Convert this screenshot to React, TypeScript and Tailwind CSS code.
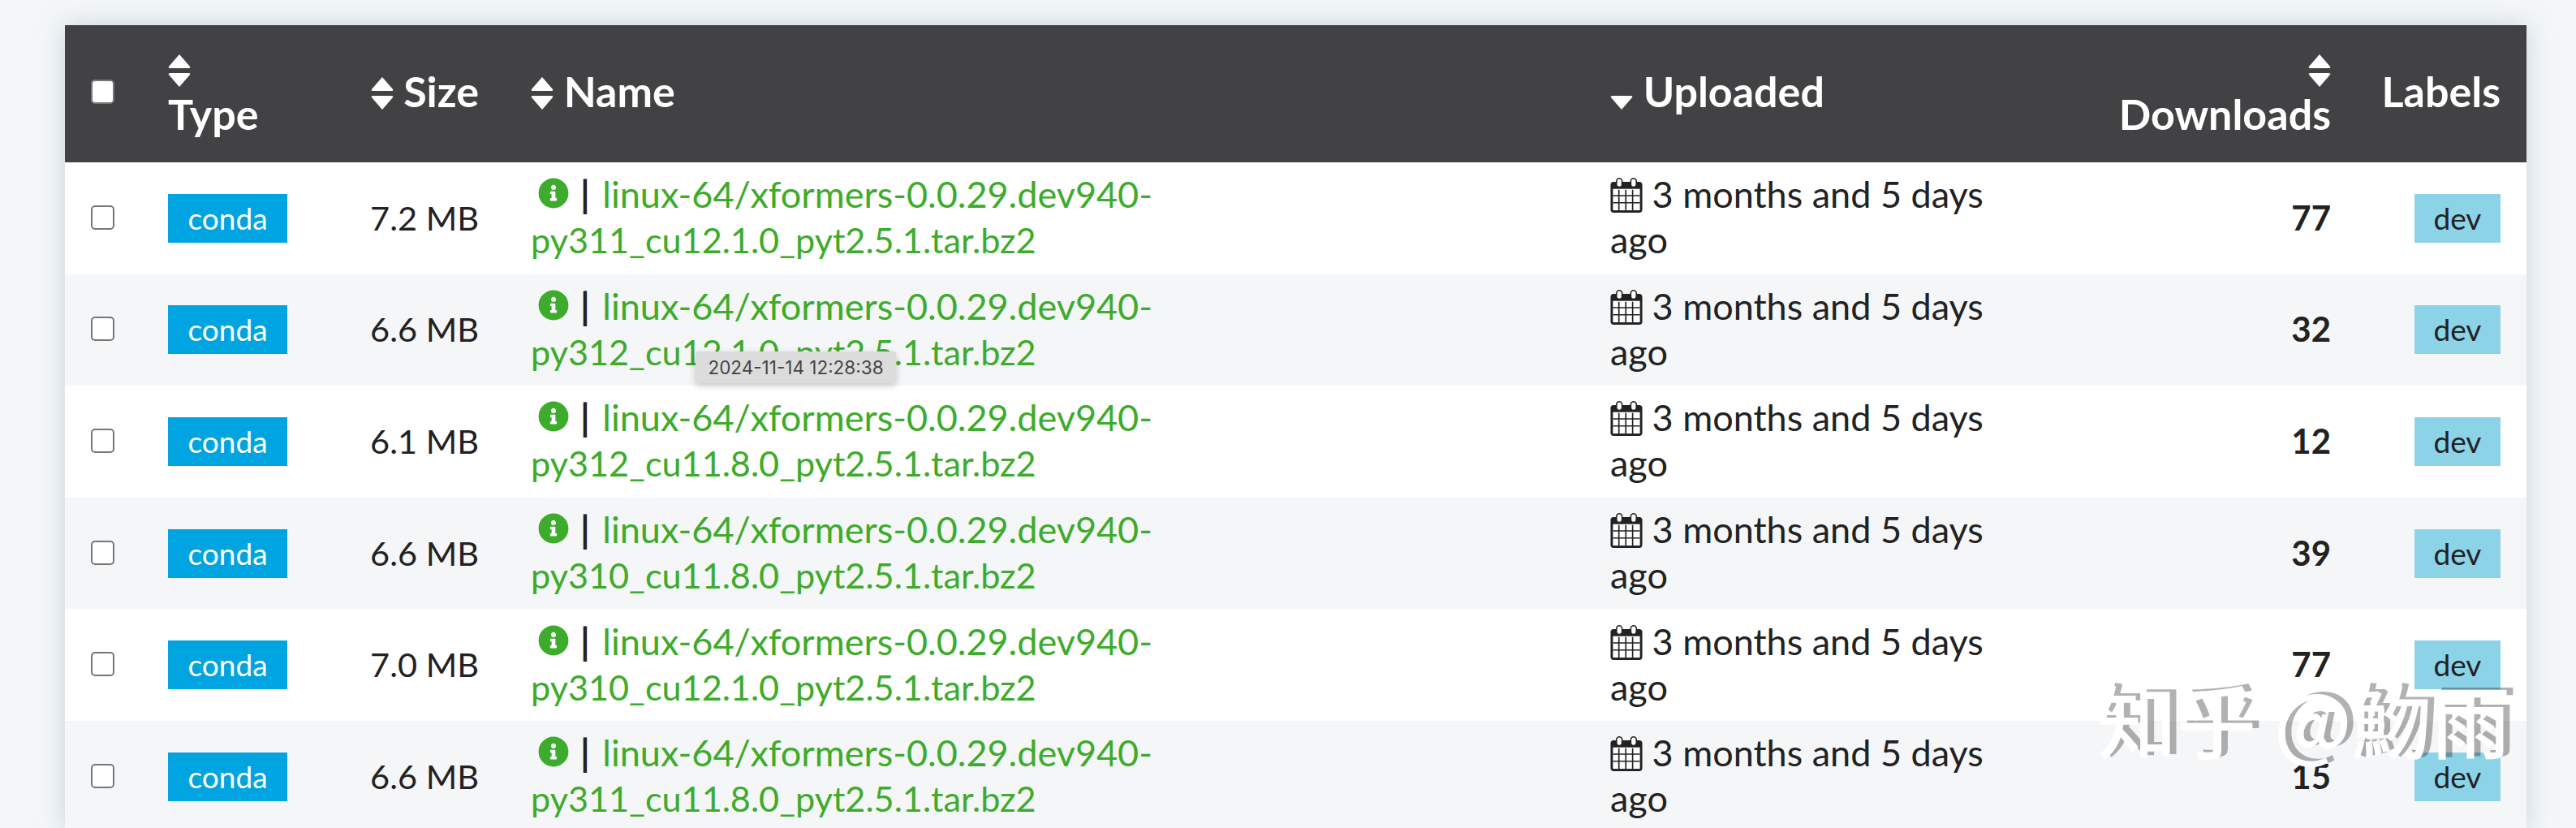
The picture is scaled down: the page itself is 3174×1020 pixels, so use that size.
import { FaInfoCircle } from 'react-icons/fa';

const rows = [
  { size: '7.2 MB', build: 'py311_cu12.1.0_pyt2.5.1.tar.bz2', downloads: 77 },
  { size: '6.6 MB', build: 'py312_cu12.1.0_pyt2.5.1.tar.bz2', downloads: 32 },
  { size: '6.1 MB', build: 'py312_cu11.8.0_pyt2.5.1.tar.bz2', downloads: 12 },
  { size: '6.6 MB', build: 'py310_cu11.8.0_pyt2.5.1.tar.bz2', downloads: 39 },
  { size: '7.0 MB', build: 'py310_cu12.1.0_pyt2.5.1.tar.bz2', downloads: 77 },
  { size: '6.6 MB', build: 'py311_cu11.8.0_pyt2.5.1.tar.bz2', downloads: 15 },
];

function SortIcon({ up = true }: { up?: boolean }) {
  return (
    <svg viewBox="0 0 30 40" className="inline-block h-[40px] w-[28px] align-[-3px] fill-white" preserveAspectRatio="none">
      {up && <path d="M15 0 L29 15 Q30 17 27 17 L3 17 Q0 17 1 15 Z" />}
      <path d="M3 23 L27 23 Q30 23 29 25 L15 40 L1 25 Q0 23 3 23 Z" />
    </svg>
  );
}

function CalendarIcon() {
  return (
    <svg viewBox="0 0 40 44" className="inline-block h-[43px] w-[40px] align-[-6px]">
      <rect x="0" y="5" width="40" height="39" rx="4" fill="#222" />
      <rect x="3" y="14" width="34" height="27" fill="#fff" />
      <path
        d="M10.500 15v26M19.200 15v26M27.800 15v26M3 22.500h34M3 31.500h34"
        stroke="#222"
        strokeWidth="1.700"
        fill="none"
      />
      <rect x="7.500" y="0.800" width="7" height="11" rx="3.500" fill="#fff" stroke="#222" strokeWidth="1.600" />
      <rect x="25.500" y="0.800" width="7" height="11" rx="3.500" fill="#fff" stroke="#222" strokeWidth="1.600" />
    </svg>
  );
}

function RowCheckbox() {
  return <input type="checkbox" className="block h-[30px] w-[29px] appearance-none rounded-[5px] border-2 border-[#777] bg-white" />;
}

export default function App() {
  return (
    <div className="relative h-[1020px] overflow-hidden bg-[#f4f7f9] pl-[80px] pt-[31px] font-['Lato','Liberation_Sans',sans-serif]">
      <div className="w-[3033px] shadow-[0_0_30px_rgba(120,150,165,0.35)]">
        <table className="w-full table-fixed border-collapse text-[42px] leading-[56px] text-[#222]">
          <colgroup>
            <col className="w-[127px]" />
            <col className="w-[213px]" />
            <col className="w-[202px]" />
            <col className="w-[1330px]" />
            <col className="w-[548px]" />
            <col className="w-[404px]" />
            <col className="w-[209px]" />
          </colgroup>
          <thead className="bg-[#424244] text-left text-[52px] text-white">
            <tr className="h-[169px]">
              <th className="pb-[6px] pl-[32px] align-middle">
                <RowCheckbox />
              </th>
              <th className="pb-[8px] align-middle font-bold">
                <SortIcon />
                <br />
                Type
              </th>
              <th className="whitespace-nowrap pb-[8px] pr-[32px] text-right align-middle font-bold">
                <SortIcon /> Size
              </th>
              <th className="pb-[8px] pl-[32px] align-middle font-bold">
                <SortIcon /> Name
              </th>
              <th className="pb-[8px] pl-[32px] align-middle font-bold">
                <SortIcon up={false} /> Uploaded
              </th>
              <th className="pb-[8px] pr-[32px] text-right align-middle font-bold">
                <SortIcon />
                <br />
                Downloads
              </th>
              <th className="pb-[8px] pr-[32px] text-right align-middle font-bold">Labels</th>
            </tr>
          </thead>
          <tbody>
            {rows.map((row, i) => (
              <tr key={i} className={`h-[137.6px] ${i % 2 === 1 ? 'bg-[#f5f6f8]' : 'bg-white'}`}>
                <td className="pb-[2px] pl-[32px] align-middle">
                  <RowCheckbox />
                </td>
                <td className="align-middle">
                  <span className="flex h-[60px] w-[147px] items-center justify-center bg-[#00a4e0] text-[37px] text-white">conda</span>
                </td>
                <td className="pb-[2px] pr-[32px] text-right align-middle text-[41.500px]">{row.size}</td>
                <td className="whitespace-nowrap pb-[3px] pl-[32px] align-middle text-[45px] text-[#3dab2b]">
                  <FaInfoCircle className="ml-[9px] mr-[14px] inline-block h-[38px] w-[38px] align-[-1px]" />
                  <span className="mr-[4px] font-bold text-[#222]">|</span> linux-64/xformers-0.0.29.dev940-
                  <br />
                  <span className="text-[43.200px]">{row.build}</span>
                </td>
                <td className="whitespace-nowrap pb-[3px] pl-[32px] align-middle text-[45px]">
                  <CalendarIcon /> 3 months and 5 days
                  <br />
                  ago
                </td>
                <td className="pb-[2px] pr-[32px] text-right align-middle font-bold">{row.downloads}</td>
                <td className="pr-[32px] align-middle">
                  <span className="ml-auto flex h-[60px] w-[106px] items-center justify-center bg-[#8cd3e8] text-[37px]">dev</span>
                </td>
              </tr>
            ))}
          </tbody>
        </table>
      </div>

      {/* browser tooltip over the second row */}
      <div className="absolute left-[857px] top-[433px] flex h-[39px] w-[247px] items-center justify-center rounded-[3px] bg-[#dcdcdc] font-['Inter',sans-serif] text-[22.500px] text-[#444] shadow-[0_3px_8px_rgba(0,0,0,0.2)]">
        2024-11-14 12:28:38
      </div>

      {/* watermark */}
      <div className="absolute left-[2584px] top-[824px] whitespace-nowrap font-['Noto_Sans_CJK_SC',sans-serif] text-[98px] font-medium leading-[120px] text-white [text-shadow:8px_-3px_0_rgba(0,0,0,0.3)]">
        知乎 @魩雨
      </div>
    </div>
  );
}
